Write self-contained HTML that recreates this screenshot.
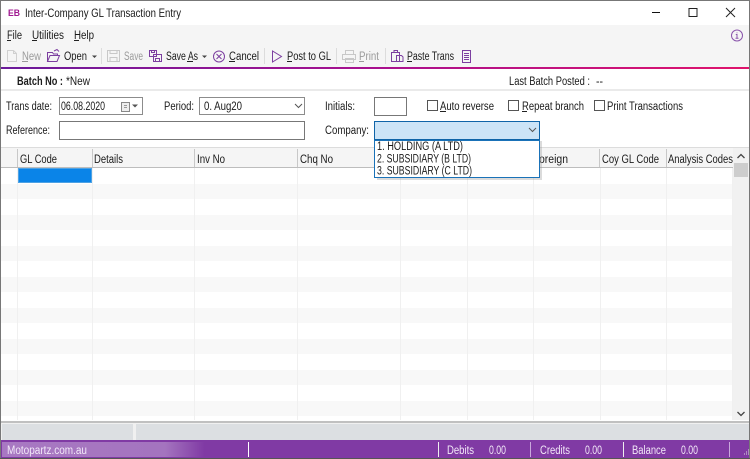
<!DOCTYPE html>
<html><head><meta charset="utf-8"><style>
html,body{margin:0;padding:0;width:750px;height:459px;overflow:hidden;background:#fff}
svg{display:block}
text{font-family:"Liberation Sans",sans-serif;font-size:11.5px;fill:#1a1a1a}
</style></head><body>
<svg width="750" height="459" viewBox="0 0 750 459" xmlns="http://www.w3.org/2000/svg">
<defs>
<linearGradient id="g" x1="0" x2="1" y1="0" y2="0"><stop offset="0" stop-color="#6a1b9a"/><stop offset=".5" stop-color="#a8108e"/><stop offset="1" stop-color="#e0146c"/></linearGradient>
<linearGradient id="s" x1="0" x2="1" y1="0" y2="0"><stop offset="0" stop-color="#a878c2"/><stop offset=".66" stop-color="#a474bf"/><stop offset=".82" stop-color="#803aa4"/><stop offset="1" stop-color="#803aa4"/></linearGradient>
</defs>
<rect width="750" height="459" fill="#fff"/>
<rect y="25" width="750" height="42" fill="#f5f5f5"/>
<rect y="67" width="750" height="2" fill="url(#g)"/>
<rect y="89" width="750" height="2" fill="#eaeaea"/>

<!-- title -->
<text x="8" y="16" style="font-size:9.5px;font-weight:bold;fill:#a01890" textLength="12" lengthAdjust="spacingAndGlyphs">EB</text>
<text x="25" y="17" textLength="156" lengthAdjust="spacingAndGlyphs" style="font-size:12px">Inter-Company GL Transaction Entry</text>
<path d="M652 12.5h8" stroke="#111" stroke-width="1"/>
<rect x="689" y="8.5" width="8" height="8" fill="none" stroke="#222" stroke-width="1"/>
<path d="M726 8l9 9M735 8l-9 9" stroke="#222" stroke-width="1" fill="none"/>

<!-- menu -->
<text x="7" y="39" textLength="15" lengthAdjust="spacingAndGlyphs">File</text><path d="M7 40.5h4" stroke="#222"/>
<text x="32" y="39" textLength="32" lengthAdjust="spacingAndGlyphs">Utilities</text><path d="M32 40.5h5" stroke="#222"/>
<text x="74" y="39" textLength="20" lengthAdjust="spacingAndGlyphs">Help</text><path d="M74 40.5h5" stroke="#222"/>
<circle cx="737" cy="35.5" r="5.5" fill="none" stroke="#8a55ab"/>
<path d="M737 32.5v.8M735.8 34.5h1.2v3.5M735.5 38.2h3" stroke="#8a55ab" fill="none"/>

<!-- toolbar -->
<path d="M7.5 50.5h6l3 3v8h-9zM13.5 50.5v3h3" fill="none" stroke="#d0d0d0"/>
<text x="22" y="60" textLength="19" lengthAdjust="spacingAndGlyphs" style="fill:#9b9b9b">New</text><path d="M22 61.5h6" stroke="#9b9b9b"/>
<path d="M47.5 61.5v-9h5l1 1.500h4v2M47.5 61.500l2.500-6h9.500l-2.500 6zM54 51l3-1.500 2 2" fill="none" stroke="#7c3fa0"/>
<text x="64" y="60" textLength="23" lengthAdjust="spacingAndGlyphs">Open</text>
<path d="M92 55.500h5l-2.500 2.500z" fill="#444"/>
<rect x="101" y="48" width="1" height="16" fill="#dcdcdc"/>
<path d="M107.500 50.500h12v11h-12zM110 50.500v3h7v-3M110 61.500v-4h7v4" fill="none" stroke="#c8c8c8"/>
<text x="124" y="60" textLength="19" lengthAdjust="spacingAndGlyphs" style="fill:#9b9b9b">Save</text>
<path d="M149.500 50.500h7v6h-7zM153.500 54.500h8v7h-8zM151.500 50.500v2h3v-2M155.500 61.500v-3h4v3" fill="none" stroke="#7c3fa0"/>
<text x="166" y="60" textLength="32" lengthAdjust="spacingAndGlyphs">Save As</text><path d="M187 61.500h6" stroke="#222"/>
<path d="M202 55.500h5l-2.500 2.500z" fill="#444"/>
<circle cx="219" cy="56.500" r="5.500" fill="none" stroke="#7c3fa0"/>
<path d="M216.500 54l5 5M221.500 54l-5 5" stroke="#7c3fa0" fill="none"/>
<text x="229" y="60" textLength="30" lengthAdjust="spacingAndGlyphs">Cancel</text><path d="M229 61.500h6" stroke="#222"/>
<rect x="264" y="48" width="1" height="16" fill="#dcdcdc"/>
<path d="M272.500 51v11l9-5.500z" fill="none" stroke="#7c3fa0"/>
<text x="287" y="60" textLength="44" lengthAdjust="spacingAndGlyphs">Post to GL</text><path d="M287 61.500h5" stroke="#222"/>
<rect x="336" y="48" width="1" height="16" fill="#dcdcdc"/>
<path d="M345.500 50.500h8v4h-8zM342.500 54.500h13v5h-13zM345.500 58.500h8v4h-8z" fill="none" stroke="#c8c8c8"/>
<text x="359" y="60" textLength="20" lengthAdjust="spacingAndGlyphs" style="fill:#9b9b9b">Print</text><path d="M359 61.500h5" stroke="#9b9b9b"/>
<rect x="385" y="48" width="1" height="16" fill="#dcdcdc"/>
<path d="M391.500 52.500h8v9h-8zM394 52.500v-2h3.500v2M396.500 55.500h5l1.500 1.500v4.500h-6.500z" fill="none" stroke="#7c3fa0"/>
<text x="407" y="60" textLength="47" lengthAdjust="spacingAndGlyphs">Paste Trans</text><path d="M407 61.500h5" stroke="#222"/>
<path d="M462.500 50.500h8v12h-8zM464 53.500h5M464 55.500h5M464 57.500h5M464 59.500h5" fill="none" stroke="#7c3fa0"/>

<!-- batch -->
<text x="17" y="85" textLength="46" lengthAdjust="spacingAndGlyphs" style="font-weight:bold">Batch No :</text>
<text x="66" y="85" textLength="24" lengthAdjust="spacingAndGlyphs">*New</text>
<text x="509" y="85" textLength="81" lengthAdjust="spacingAndGlyphs">Last Batch Posted :</text>
<text x="596" y="85" textLength="7" lengthAdjust="spacingAndGlyphs">--</text>

<!-- form row 1 -->
<text x="6" y="110" textLength="46" lengthAdjust="spacingAndGlyphs">Trans date:</text>
<rect x="59.500" y="97.500" width="83" height="17" fill="#fff" stroke="#8c8c8c"/>
<text x="61" y="110" textLength="44" lengthAdjust="spacingAndGlyphs">06.08.2020</text>
<rect x="121.500" y="102.500" width="8" height="9" fill="#eee" stroke="#888"/>
<path d="M124 105.500h3M124 107.500h3" stroke="#999"/>
<path d="M132 104.500h6l-3 3z" fill="#555"/>
<text x="164" y="110" textLength="30" lengthAdjust="spacingAndGlyphs">Period:</text>
<rect x="199.500" y="97.500" width="105" height="17" fill="#fff" stroke="#8c8c8c"/>
<text x="204" y="110" textLength="38" lengthAdjust="spacingAndGlyphs">0. Aug20</text>
<path d="M295 104l3.500 3.500 3.500-3.500" fill="none" stroke="#555"/>
<text x="325" y="110" textLength="30" lengthAdjust="spacingAndGlyphs">Initials:</text>
<rect x="374.500" y="97.500" width="32" height="18" fill="#fff" stroke="#777"/>
<rect x="427.500" y="100.500" width="10" height="10" fill="#fff" stroke="#555"/>
<text x="440" y="110" textLength="54" lengthAdjust="spacingAndGlyphs">Auto reverse</text><path d="M440 111.500h6" stroke="#222"/>
<rect x="508.500" y="100.500" width="10" height="10" fill="#fff" stroke="#555"/>
<text x="522" y="110" textLength="62" lengthAdjust="spacingAndGlyphs">Repeat branch</text><path d="M522 111.500h5" stroke="#222"/>
<rect x="594.500" y="100.500" width="10" height="10" fill="#fff" stroke="#555"/>
<text x="607" y="110" textLength="76" lengthAdjust="spacingAndGlyphs">Print Transactions</text>

<!-- form row 2 -->
<text x="6" y="134" textLength="44" lengthAdjust="spacingAndGlyphs">Reference:</text>
<rect x="59.500" y="121.500" width="245" height="18" fill="#fff" stroke="#777"/>
<text x="325" y="134" textLength="44" lengthAdjust="spacingAndGlyphs">Company:</text>

<!-- grid -->
<rect x="1" y="148" width="733" height="20" fill="#f5f5f5"/>
<rect x="1" y="147" width="749" height="1" fill="#dcdcdc"/>
<rect x="1" y="167" width="733" height="1" fill="#bdbdbd"/>
<g fill="#f8f8f8">
<rect x="1" y="184" width="733" height="15"/><rect x="1" y="215" width="733" height="15"/><rect x="1" y="246" width="733" height="15"/><rect x="1" y="277" width="733" height="15"/><rect x="1" y="308" width="733" height="15"/><rect x="1" y="339" width="733" height="15"/><rect x="1" y="370" width="733" height="15"/><rect x="1" y="401" width="733" height="15"/>
</g>
<g fill="#f0f0f0">
<rect x="17" y="168" width="1" height="252"/><rect x="92" y="168" width="1" height="252"/><rect x="194" y="168" width="1" height="252"/><rect x="297" y="168" width="1" height="252"/><rect x="400" y="168" width="1" height="252"/><rect x="467" y="168" width="1" height="252"/><rect x="533" y="168" width="1" height="252"/><rect x="600" y="168" width="1" height="252"/><rect x="666" y="168" width="1" height="252"/><rect x="732" y="168" width="1" height="252"/>
</g>
<g fill="#c8c8c8">
<rect x="17" y="149" width="1" height="18"/><rect x="92" y="149" width="1" height="18"/><rect x="194" y="149" width="1" height="18"/><rect x="297" y="149" width="1" height="18"/><rect x="400" y="149" width="1" height="18"/><rect x="467" y="149" width="1" height="18"/><rect x="533" y="149" width="1" height="18"/><rect x="599" y="149" width="1" height="18"/><rect x="666" y="149" width="1" height="18"/>
</g>
<text x="20" y="163" textLength="37" lengthAdjust="spacingAndGlyphs">GL Code</text>
<text x="94" y="163" textLength="29" lengthAdjust="spacingAndGlyphs">Details</text>
<text x="197" y="163" textLength="28" lengthAdjust="spacingAndGlyphs">Inv No</text>
<text x="300" y="163" textLength="33" lengthAdjust="spacingAndGlyphs">Chq No</text>
<text x="539" y="163" textLength="29" lengthAdjust="spacingAndGlyphs">oreign</text>
<text x="602" y="163" textLength="57" lengthAdjust="spacingAndGlyphs">Coy GL Code</text>
<text x="668" y="163" textLength="65" lengthAdjust="spacingAndGlyphs">Analysis Codes</text>
<rect x="18" y="168" width="74" height="15" fill="#0a84e8"/>
<rect x="18.500" y="168.500" width="73" height="14" fill="none" stroke="#4ea2e4"/>

<!-- scrollbar -->
<rect x="733" y="148" width="16" height="272" fill="#f1f1f1"/>
<path d="M737.500 158l3.500-3.500 3.500 3.500" fill="none" stroke="#444" stroke-width="1.300"/>
<rect x="734" y="163" width="14" height="14" fill="#cdcdcd"/>
<path d="M737.500 412l3.500 3.500 3.500-3.500" fill="none" stroke="#444" stroke-width="1.300"/>

<!-- dropdown -->
<rect x="374.500" y="121.500" width="165" height="18" fill="#cce4f7" stroke="#0f64a8"/>
<path d="M529 128l3.500 3.500 3.500-3.500" fill="none" stroke="#555"/>
<rect x="377" y="141" width="165" height="39" fill="#999" opacity=".35"/>
<rect x="374.500" y="140.500" width="165" height="37" fill="#fff" stroke="#1a72b8"/>
<text x="377" y="150" textLength="86" lengthAdjust="spacingAndGlyphs">1. HOLDING (A LTD)</text>
<text x="377" y="162.500" textLength="94" lengthAdjust="spacingAndGlyphs">2. SUBSIDIARY (B LTD)</text>
<text x="377" y="174.500" textLength="95" lengthAdjust="spacingAndGlyphs">3. SUBSIDIARY (C LTD)</text>

<!-- bottom -->
<rect x="1" y="421" width="749" height="2" fill="#c0c0c0"/>
<rect x="1" y="423" width="749" height="17" fill="#f0f0f0"/>
<rect x="2" y="424" width="131" height="16" fill="#dcdfe2"/>
<rect x="136" y="424" width="613" height="16" fill="#dcdfe2"/>
<rect x="1" y="440" width="749" height="18" fill="#803aa4"/>
<rect x="2" y="442" width="247" height="15" fill="url(#s)"/>
<text x="7" y="454" textLength="80" lengthAdjust="spacingAndGlyphs" style="fill:#f2e8f8">Motopartz.com.au</text>
<g fill="#eee">
<rect x="438" y="442" width="1" height="15"/><rect x="623" y="442" width="1" height="15"/>
</g>
<rect x="248" y="442" width="1" height="15" fill="#fff"/>
<rect x="530" y="442" width="1" height="15" fill="#c9a8dc"/>
<rect x="729" y="442" width="1" height="15" fill="#c9a8dc"/>
<g style="fill:#f2e8f8">
<text x="447" y="454" textLength="27" lengthAdjust="spacingAndGlyphs" style="fill:#f2e8f8">Debits</text>
<text x="489" y="454" textLength="17" lengthAdjust="spacingAndGlyphs" style="fill:#f2e8f8">0.00</text>
<text x="540" y="454" textLength="30" lengthAdjust="spacingAndGlyphs" style="fill:#f2e8f8">Credits</text>
<text x="585" y="454" textLength="17" lengthAdjust="spacingAndGlyphs" style="fill:#f2e8f8">0.00</text>
<text x="632" y="454" textLength="34" lengthAdjust="spacingAndGlyphs" style="fill:#f2e8f8">Balance</text>
<text x="681" y="454" textLength="17" lengthAdjust="spacingAndGlyphs" style="fill:#f2e8f8">0.00</text>
</g>
<path d="M748 450h1M746 452h1M748 452h1M744 454h1M746 454h1M748 454h1" stroke="#ddd" stroke-width="1"/>

<!-- window border -->
<rect x="0" y="0" width="750" height="1" fill="#777"/>
<rect x="0" y="0" width="1" height="459" fill="#777"/>
<rect x="749" y="0" width="1" height="459" fill="#777"/>
<rect x="0" y="458" width="750" height="1" fill="#555"/>
</svg>
</body></html>
